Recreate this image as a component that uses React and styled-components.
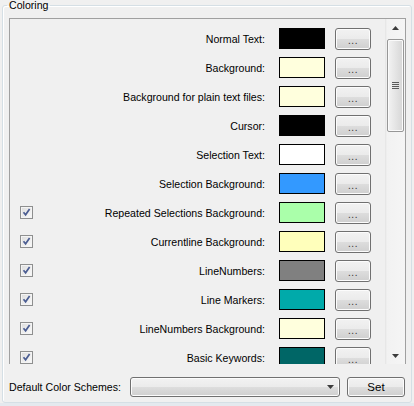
import React from "react";
import styled, { createGlobalStyle } from "styled-components";

const Global = createGlobalStyle`
  html, body { margin: 0; padding: 0; background: #f0f0f0; }
  body { font-family: "Liberation Sans", Arial, sans-serif; font-size: 10.6px; color: #000; }
`;

const Window = styled.div`
  width: 414px;
  height: 406px;
  box-sizing: border-box;
  background: #f0f0f0;
  display: flex;
  flex-direction: column;
  padding: 0 2px 0 2px;
  overflow: hidden;
`;

const GroupBox = styled.fieldset`
  margin: -1px 0 0 0;
  padding: 7px 5px 5px 6px;
  border: 1px solid #d5dfe5;
  border-radius: 3px;
  box-shadow: inset 1px 1px 0 #fff;
  display: flex;
  flex-direction: column;
  min-width: 0;
`;

const Legend = styled.legend`
  font-size: 10.6px;
  line-height: 12px;
  padding: 0 2px;
  margin-left: -2px;
`;

const Panel = styled.div`
  height: 346px;
  box-sizing: border-box;
  border: 1px solid #a0a0a0;
  border-bottom: none;
  display: flex;
  overflow: hidden;
`;

const RowList = styled.div`
  flex: 1;
  padding-top: 5px;
  display: flex;
  flex-direction: column;
`;

const Row = styled.div`
  height: 29px;
  flex: none;
  display: flex;
  align-items: center;
  padding: 0 14px 0 10px;
`;

const Check = styled.span`
  width: 13px;
  height: 13px;
  box-sizing: border-box;
  flex: none;
  border: 1px solid #8e8f8f;
  background: linear-gradient(135deg, #dcdcdc, #fbfbfb);
  box-shadow: inset 0 0 0 1px #f4f4f4;
  display: flex;
  visibility: ${(p) => (p.$on ? "visible" : "hidden")};
`;

const Label = styled.span`
  flex: 1;
  text-align: right;
  white-space: nowrap;
  padding-right: 13px;
  margin-right: 1px;
`;

const Swatch = styled.span`
  width: 46px;
  height: 21px;
  box-sizing: border-box;
  flex: none;
  border: 1px solid #000;
  background: ${(p) => p.$color};
`;

const DotsButton = styled.span`
  width: 36px;
  height: 22px;
  box-sizing: border-box;
  margin-left: 10px;
  flex: none;
  border: 1px solid #707070;
  border-radius: 3px;
  background: linear-gradient(#f2f2f2 0%, #ebebeb 50%, #dddddd 51%, #cfcfcf 100%);
  box-shadow: inset 0 0 0 1px #fcfcfc;
  color: #333;
  font-size: 10px;
  display: flex;
  align-items: center;
  justify-content: center;
  padding-top: 3px;
  letter-spacing: 0.5px;
`;

const ScrollBar = styled.div`
  width: 20px;
  flex: none;
  display: flex;
  flex-direction: column;
  align-items: center;
  background: linear-gradient(to right, #e3e3e3 0px, #f2f2f2 2px, #f5f5f5 100%);
`;

const ArrowCell = styled.div`
  height: 17px;
  width: 100%;
  flex: none;
  display: flex;
  align-items: center;
  justify-content: center;
`;

const Thumb = styled.div`
  margin-top: 3px;
  width: 17px;
  height: 93px;
  box-sizing: border-box;
  margin-left: 1px;
  border: 1px solid #979797;
  border-radius: 2px;
  background: linear-gradient(to right, #f3f3f3, #e6e6e6 45%, #d6d6d6);
  box-shadow: inset 0 0 0 1px #fafafa;
  display: flex;
  align-items: center;
  justify-content: center;
`;

const Spacer = styled.div`
  flex: 1;
`;

const BottomRow = styled.div`
  margin-top: 13px;
  height: 20px;
  display: flex;
  align-items: center;
`;

const BottomLabel = styled.span`
  width: 121px;
  flex: none;
  white-space: nowrap;
`;

const Combo = styled.div`
  width: 210px;
  height: 20px;
  box-sizing: border-box;
  border: 1px solid #707070;
  border-radius: 3px;
  background: linear-gradient(#f2f2f2 0%, #ebebeb 50%, #dddddd 51%, #cfcfcf 100%);
  box-shadow: inset 0 0 0 1px #fcfcfc;
  display: flex;
  align-items: center;
  justify-content: flex-end;
  padding-right: 5px;
`;

const SetButton = styled.div`
  margin-left: 7px;
  width: 58px;
  height: 20px;
  box-sizing: border-box;
  border: 1px solid #707070;
  border-radius: 3px;
  background: linear-gradient(#f2f2f2 0%, #ebebeb 50%, #dddddd 51%, #cfcfcf 100%);
  box-shadow: inset 0 0 0 1px #fcfcfc;
  display: flex;
  align-items: center;
  justify-content: center;
  font-size: 11.5px;
`;

const BottomStrip = styled.div`
  flex: 1;
  margin: 0 -2px;
  background: #e4e9ee;
`;

const rows = [
  { label: "Normal Text:", color: "#000000", check: false },
  { label: "Background:", color: "#ffffdd", check: false },
  { label: "Background for plain text files:", color: "#ffffdd", check: false },
  { label: "Cursor:", color: "#000000", check: false },
  { label: "Selection Text:", color: "#ffffff", check: false },
  { label: "Selection Background:", color: "#3399ff", check: false },
  { label: "Repeated Selections Background:", color: "#aaffaa", check: true },
  { label: "Currentline Background:", color: "#ffffbb", check: true },
  { label: "LineNumbers:", color: "#808080", check: true },
  { label: "Line Markers:", color: "#00aaaa", check: true },
  { label: "LineNumbers Background:", color: "#ffffdd", check: true },
  { label: "Basic Keywords:", color: "#006666", check: true },
];

const CheckMark = () => (
  <svg width="11" height="11" viewBox="0 0 11 11">
    <path d="M2.5 5.2 L4.6 7.8 L8.6 2" fill="none" stroke="#4b5d92" strokeWidth="1.7" />
  </svg>
);

const Triangle = ({ down }) => (
  <svg width="7" height="4" viewBox="0 0 7 4">
    <path d={down ? "M0 0 H7 L3.5 4 Z" : "M0 4 H7 L3.5 0 Z"} fill="#3c3c3c" />
  </svg>
);

const Grip = () => (
  <svg width="7" height="8" viewBox="0 0 7 8">
    {[0.5, 2.5, 4.5, 6.5].map((y) => (
      <line key={y} x1="0" x2="7" y1={y} y2={y} stroke="#5a5a5a" strokeWidth="1" />
    ))}
  </svg>
);

export default function App() {
  return (
    <>
      <Global />
      <Window>
        <GroupBox>
          <Legend>Coloring</Legend>
          <Panel>
            <RowList>
              {rows.map((r) => (
                <Row key={r.label}>
                  <Check $on={r.check}>
                    <CheckMark />
                  </Check>
                  <Label>{r.label}</Label>
                  <Swatch $color={r.color} />
                  <DotsButton>...</DotsButton>
                </Row>
              ))}
            </RowList>
            <ScrollBar>
              <ArrowCell>
                <Triangle />
              </ArrowCell>
              <Thumb>
                <Grip />
              </Thumb>
              <Spacer />
              <ArrowCell>
                <Triangle down />
              </ArrowCell>
            </ScrollBar>
          </Panel>
          <BottomRow>
            <BottomLabel>Default Color Schemes:</BottomLabel>
            <Combo>
              <Triangle down />
            </Combo>
            <SetButton>Set</SetButton>
          </BottomRow>
        </GroupBox>
        <BottomStrip />
      </Window>
    </>
  );
}
